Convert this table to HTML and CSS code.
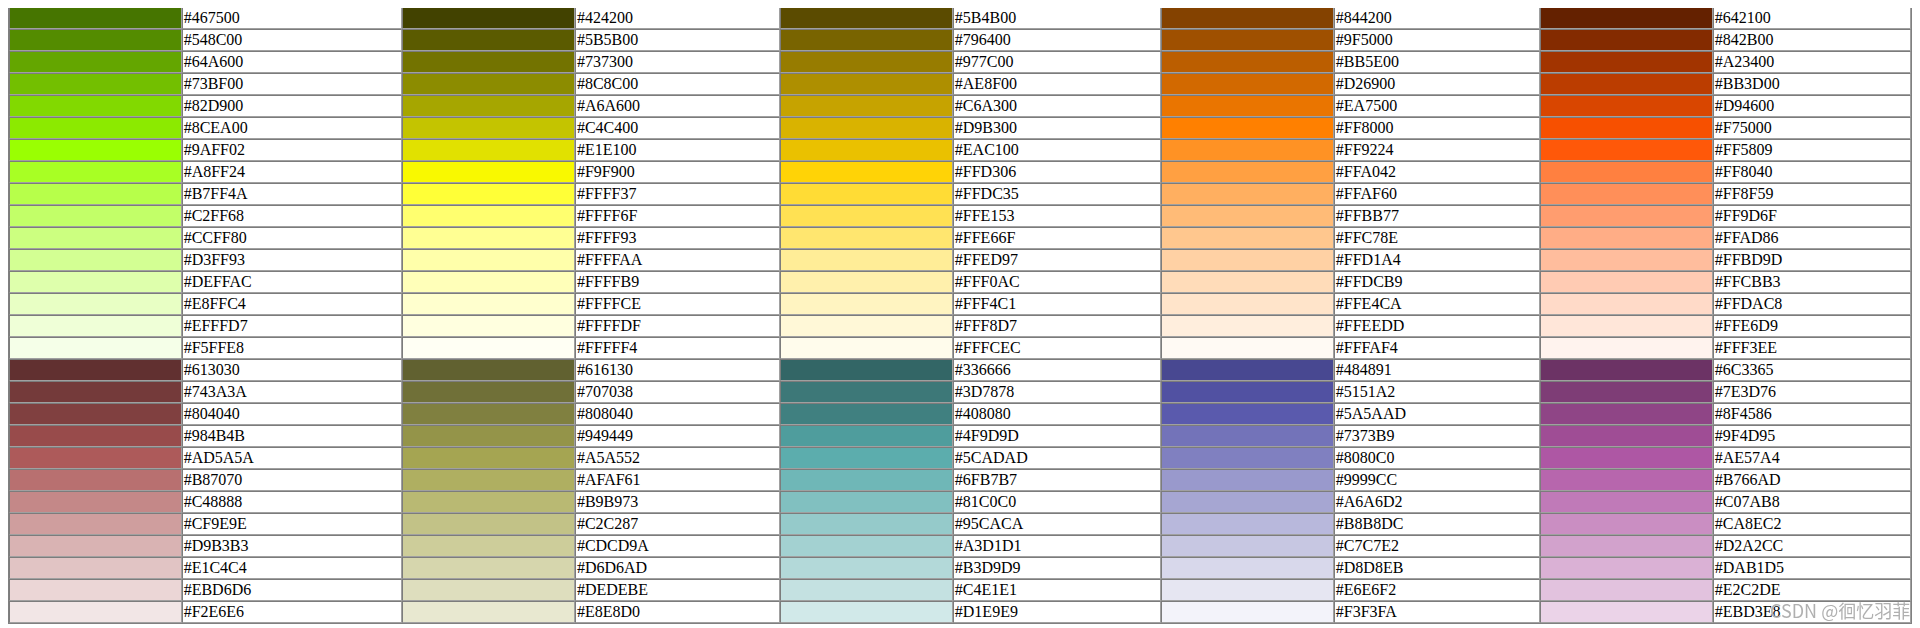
FILE: index.html
```html
<!DOCTYPE html>
<html lang="zh-CN">
<head>
<meta charset="utf-8">
<title>色碼表</title>
<link rel="stylesheet" href="styles.css">
</head>
<body>
<table class="palette">
<colgroup>
<col class="c-sw"><col class="c-t1"><col class="c-sw"><col class="c-t2"><col class="c-sw"><col class="c-t3"><col class="c-sw"><col class="c-t4"><col class="c-sw"><col class="c-t5">
</colgroup>
<tbody>
<tr><td style="background:#FBFBFF"></td><td>#FBFBFF</td><td style="background:#ECF5FF"></td><td>#ECF5FF</td><td style="background:#FDFFFF"></td><td>#FDFFFF</td><td style="background:#E8FFF5"></td><td>#E8FFF5</td><td style="background:#F0FFF0"></td><td>#F0FFF0</td></tr>
<tr><td style="background:#467500"></td><td>#467500</td><td style="background:#424200"></td><td>#424200</td><td style="background:#5B4B00"></td><td>#5B4B00</td><td style="background:#844200"></td><td>#844200</td><td style="background:#642100"></td><td>#642100</td></tr>
<tr><td style="background:#548C00"></td><td>#548C00</td><td style="background:#5B5B00"></td><td>#5B5B00</td><td style="background:#796400"></td><td>#796400</td><td style="background:#9F5000"></td><td>#9F5000</td><td style="background:#842B00"></td><td>#842B00</td></tr>
<tr><td style="background:#64A600"></td><td>#64A600</td><td style="background:#737300"></td><td>#737300</td><td style="background:#977C00"></td><td>#977C00</td><td style="background:#BB5E00"></td><td>#BB5E00</td><td style="background:#A23400"></td><td>#A23400</td></tr>
<tr><td style="background:#73BF00"></td><td>#73BF00</td><td style="background:#8C8C00"></td><td>#8C8C00</td><td style="background:#AE8F00"></td><td>#AE8F00</td><td style="background:#D26900"></td><td>#D26900</td><td style="background:#BB3D00"></td><td>#BB3D00</td></tr>
<tr><td style="background:#82D900"></td><td>#82D900</td><td style="background:#A6A600"></td><td>#A6A600</td><td style="background:#C6A300"></td><td>#C6A300</td><td style="background:#EA7500"></td><td>#EA7500</td><td style="background:#D94600"></td><td>#D94600</td></tr>
<tr><td style="background:#8CEA00"></td><td>#8CEA00</td><td style="background:#C4C400"></td><td>#C4C400</td><td style="background:#D9B300"></td><td>#D9B300</td><td style="background:#FF8000"></td><td>#FF8000</td><td style="background:#F75000"></td><td>#F75000</td></tr>
<tr><td style="background:#9AFF02"></td><td>#9AFF02</td><td style="background:#E1E100"></td><td>#E1E100</td><td style="background:#EAC100"></td><td>#EAC100</td><td style="background:#FF9224"></td><td>#FF9224</td><td style="background:#FF5809"></td><td>#FF5809</td></tr>
<tr><td style="background:#A8FF24"></td><td>#A8FF24</td><td style="background:#F9F900"></td><td>#F9F900</td><td style="background:#FFD306"></td><td>#FFD306</td><td style="background:#FFA042"></td><td>#FFA042</td><td style="background:#FF8040"></td><td>#FF8040</td></tr>
<tr><td style="background:#B7FF4A"></td><td>#B7FF4A</td><td style="background:#FFFF37"></td><td>#FFFF37</td><td style="background:#FFDC35"></td><td>#FFDC35</td><td style="background:#FFAF60"></td><td>#FFAF60</td><td style="background:#FF8F59"></td><td>#FF8F59</td></tr>
<tr><td style="background:#C2FF68"></td><td>#C2FF68</td><td style="background:#FFFF6F"></td><td>#FFFF6F</td><td style="background:#FFE153"></td><td>#FFE153</td><td style="background:#FFBB77"></td><td>#FFBB77</td><td style="background:#FF9D6F"></td><td>#FF9D6F</td></tr>
<tr><td style="background:#CCFF80"></td><td>#CCFF80</td><td style="background:#FFFF93"></td><td>#FFFF93</td><td style="background:#FFE66F"></td><td>#FFE66F</td><td style="background:#FFC78E"></td><td>#FFC78E</td><td style="background:#FFAD86"></td><td>#FFAD86</td></tr>
<tr><td style="background:#D3FF93"></td><td>#D3FF93</td><td style="background:#FFFFAA"></td><td>#FFFFAA</td><td style="background:#FFED97"></td><td>#FFED97</td><td style="background:#FFD1A4"></td><td>#FFD1A4</td><td style="background:#FFBD9D"></td><td>#FFBD9D</td></tr>
<tr><td style="background:#DEFFAC"></td><td>#DEFFAC</td><td style="background:#FFFFB9"></td><td>#FFFFB9</td><td style="background:#FFF0AC"></td><td>#FFF0AC</td><td style="background:#FFDCB9"></td><td>#FFDCB9</td><td style="background:#FFCBB3"></td><td>#FFCBB3</td></tr>
<tr><td style="background:#E8FFC4"></td><td>#E8FFC4</td><td style="background:#FFFFCE"></td><td>#FFFFCE</td><td style="background:#FFF4C1"></td><td>#FFF4C1</td><td style="background:#FFE4CA"></td><td>#FFE4CA</td><td style="background:#FFDAC8"></td><td>#FFDAC8</td></tr>
<tr><td style="background:#EFFFD7"></td><td>#EFFFD7</td><td style="background:#FFFFDF"></td><td>#FFFFDF</td><td style="background:#FFF8D7"></td><td>#FFF8D7</td><td style="background:#FFEEDD"></td><td>#FFEEDD</td><td style="background:#FFE6D9"></td><td>#FFE6D9</td></tr>
<tr><td style="background:#F5FFE8"></td><td>#F5FFE8</td><td style="background:#FFFFF4"></td><td>#FFFFF4</td><td style="background:#FFFCEC"></td><td>#FFFCEC</td><td style="background:#FFFAF4"></td><td>#FFFAF4</td><td style="background:#FFF3EE"></td><td>#FFF3EE</td></tr>
<tr><td style="background:#613030"></td><td>#613030</td><td style="background:#616130"></td><td>#616130</td><td style="background:#336666"></td><td>#336666</td><td style="background:#484891"></td><td>#484891</td><td style="background:#6C3365"></td><td>#6C3365</td></tr>
<tr><td style="background:#743A3A"></td><td>#743A3A</td><td style="background:#707038"></td><td>#707038</td><td style="background:#3D7878"></td><td>#3D7878</td><td style="background:#5151A2"></td><td>#5151A2</td><td style="background:#7E3D76"></td><td>#7E3D76</td></tr>
<tr><td style="background:#804040"></td><td>#804040</td><td style="background:#808040"></td><td>#808040</td><td style="background:#408080"></td><td>#408080</td><td style="background:#5A5AAD"></td><td>#5A5AAD</td><td style="background:#8F4586"></td><td>#8F4586</td></tr>
<tr><td style="background:#984B4B"></td><td>#984B4B</td><td style="background:#949449"></td><td>#949449</td><td style="background:#4F9D9D"></td><td>#4F9D9D</td><td style="background:#7373B9"></td><td>#7373B9</td><td style="background:#9F4D95"></td><td>#9F4D95</td></tr>
<tr><td style="background:#AD5A5A"></td><td>#AD5A5A</td><td style="background:#A5A552"></td><td>#A5A552</td><td style="background:#5CADAD"></td><td>#5CADAD</td><td style="background:#8080C0"></td><td>#8080C0</td><td style="background:#AE57A4"></td><td>#AE57A4</td></tr>
<tr><td style="background:#B87070"></td><td>#B87070</td><td style="background:#AFAF61"></td><td>#AFAF61</td><td style="background:#6FB7B7"></td><td>#6FB7B7</td><td style="background:#9999CC"></td><td>#9999CC</td><td style="background:#B766AD"></td><td>#B766AD</td></tr>
<tr><td style="background:#C48888"></td><td>#C48888</td><td style="background:#B9B973"></td><td>#B9B973</td><td style="background:#81C0C0"></td><td>#81C0C0</td><td style="background:#A6A6D2"></td><td>#A6A6D2</td><td style="background:#C07AB8"></td><td>#C07AB8</td></tr>
<tr><td style="background:#CF9E9E"></td><td>#CF9E9E</td><td style="background:#C2C287"></td><td>#C2C287</td><td style="background:#95CACA"></td><td>#95CACA</td><td style="background:#B8B8DC"></td><td>#B8B8DC</td><td style="background:#CA8EC2"></td><td>#CA8EC2</td></tr>
<tr><td style="background:#D9B3B3"></td><td>#D9B3B3</td><td style="background:#CDCD9A"></td><td>#CDCD9A</td><td style="background:#A3D1D1"></td><td>#A3D1D1</td><td style="background:#C7C7E2"></td><td>#C7C7E2</td><td style="background:#D2A2CC"></td><td>#D2A2CC</td></tr>
<tr><td style="background:#E1C4C4"></td><td>#E1C4C4</td><td style="background:#D6D6AD"></td><td>#D6D6AD</td><td style="background:#B3D9D9"></td><td>#B3D9D9</td><td style="background:#D8D8EB"></td><td>#D8D8EB</td><td style="background:#DAB1D5"></td><td>#DAB1D5</td></tr>
<tr><td style="background:#EBD6D6"></td><td>#EBD6D6</td><td style="background:#DEDEBE"></td><td>#DEDEBE</td><td style="background:#C4E1E1"></td><td>#C4E1E1</td><td style="background:#E6E6F2"></td><td>#E6E6F2</td><td style="background:#E2C2DE"></td><td>#E2C2DE</td></tr>
<tr><td style="background:#F2E6E6"></td><td>#F2E6E6</td><td style="background:#E8E8D0"></td><td>#E8E8D0</td><td style="background:#D1E9E9"></td><td>#D1E9E9</td><td style="background:#F3F3FA"></td><td>#F3F3FA</td><td style="background:#EBD3E8"></td><td>#EBD3E8</td></tr>
</tbody>
</table>
<div class="watermark">CSDN @徊忆羽菲</div>
</body>
</html>
```
FILE: styles.css
```css
html, body {
  background: #ffffff;
}
body {
  margin: 8px;
  font-family: "Liberation Serif", "Times New Roman", serif;
  font-size: 16px;
  color: #000000;
  overflow: hidden;
}
.palette {
  table-layout: fixed;
  width: 1904px;
  margin-top: -24px;
  border-collapse: separate;
  border-spacing: 0;
  border: 1px solid #808080;
}
.palette td {
  border: 1px solid;
  border-color: #7c7c7c #a0a0a0 #a0a0a0 #7c7c7c;
  padding: 1px;
  height: 18px;
  line-height: 18px;
  white-space: nowrap;
  overflow: hidden;
  vertical-align: middle;
}
.c-sw { width: 169px; }
.c-t1 { width: 216px; }
.c-t2 { width: 201px; }
.c-t3 { width: 204px; }
.c-t4 { width: 202px; }
.c-t5 { width: 194px; }
.watermark {
  position: fixed;
  left: 1770px;
  top: 598px;
  font-family: "Noto Sans CJK SC", "Noto Sans", sans-serif;
  font-size: 18px;
  line-height: 24px;
  color: rgba(150, 150, 150, 0.75);
  text-shadow: 0 0 1px rgba(255, 255, 255, 0.9);
  white-space: nowrap;
}
```
